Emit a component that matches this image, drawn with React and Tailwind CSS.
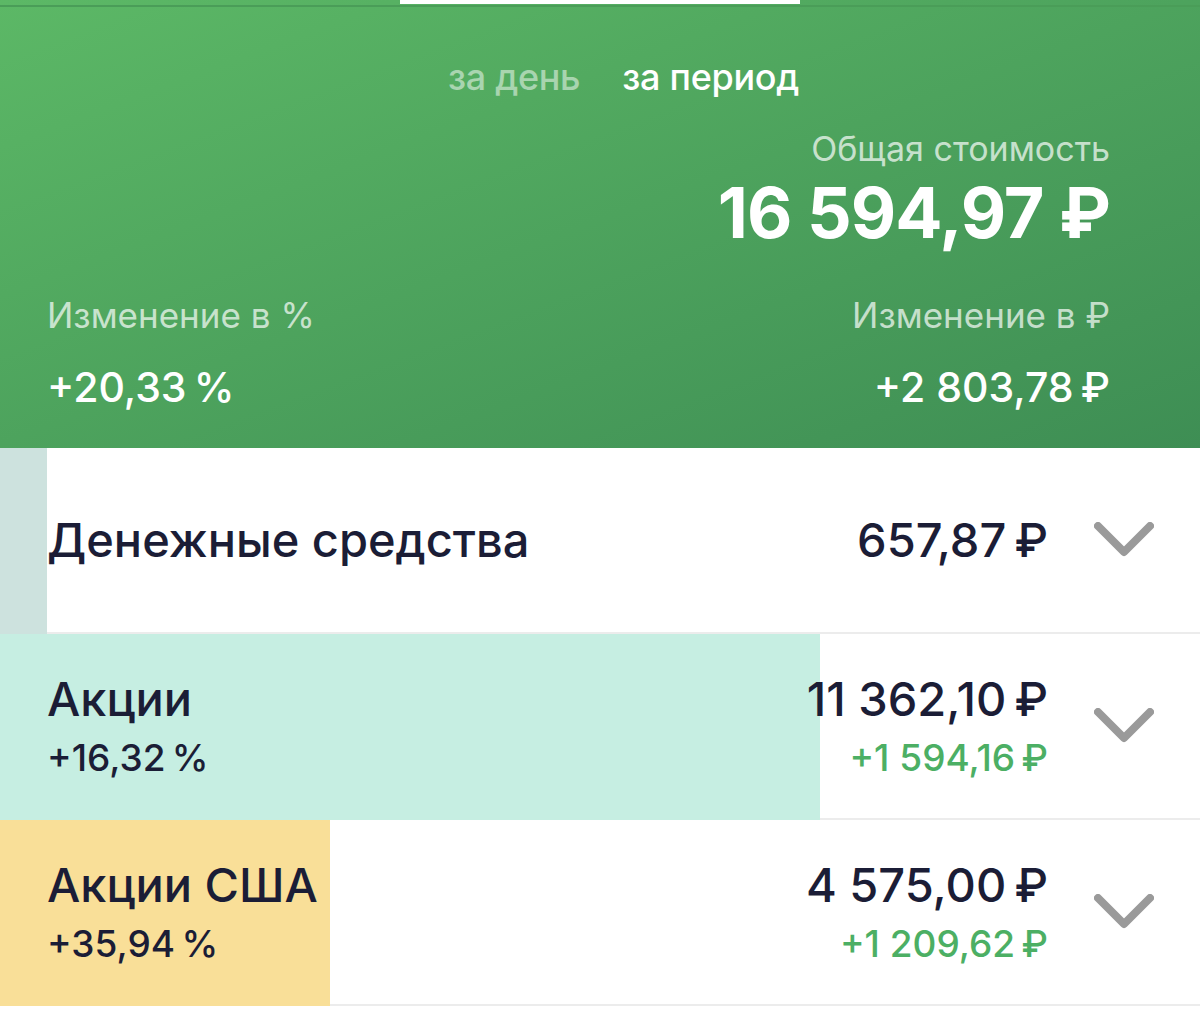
import React from "react";

const Chevron = () => (
  <svg width="60" height="36" viewBox="0 0 60 36" fill="none" className="shrink-0">
    <path d="M4 4 L30 30 L56 4" stroke="#9a9a9a" strokeWidth="8" strokeLinecap="round" strokeLinejoin="round" />
  </svg>
);

const rows = [
  { name: "Денежные средства", value: "657,87\u2009₽", bar: 47, color: "bg-[#cde2de]" },
  { name: "Акции", pct: "+16,32\u2009%", value: "11 362,10\u2009₽", change: "+1 594,16\u2009₽", bar: 820, color: "bg-[#c6eee2]" },
  { name: "Акции США", pct: "+35,94\u2009%", value: "4 575,00\u2009₽", change: "+1 209,62\u2009₽", bar: 330, color: "bg-[#f9df98]" },
];

export default function App() {
  return (
    <div className="w-[1200px] min-h-[1027px] bg-white font-['Inter',sans-serif] text-[#1b1d36]">
      <div className="h-[448px] bg-gradient-to-br from-[#5cb866] to-[#3e8e54] text-white flex flex-col">
        <div className="h-[7px] border-b-2 border-[#4a9d58] flex justify-center">
          <div className="w-[400px] h-[4px] bg-white" />
        </div>
        <div className="flex justify-center pl-[47px] gap-[42px] mt-[50px] text-[36px] leading-[40px] font-medium tracking-[-0.3px]">
          <span className="text-white/50">за день</span>
          <span className="text-white">за период</span>
        </div>
        <div className="flex flex-col items-end pr-[90px] mt-[32px]">
          <div className="text-[34px] leading-[40px] text-white/70">Общая стоимость</div>
          <div className="text-[70px] leading-[80px] font-bold tracking-[-1px] mt-[4px]">16 594,97 ₽</div>
        </div>
        <div className="flex justify-between pl-[47px] pr-[90px] mt-[42px]">
          <div className="flex flex-col">
            <div className="text-[35px] leading-[40px] text-white/70">Изменение в %</div>
            <div className="text-[41px] leading-[44px] font-medium mt-[30px]">+20,33{"\u2009"}%</div>
          </div>
          <div className="flex flex-col items-end">
            <div className="text-[35px] leading-[40px] text-white/70">Изменение в ₽</div>
            <div className="text-[41px] leading-[44px] font-medium mt-[30px]">+2 803,78{"\u2009"}₽</div>
          </div>
        </div>
      </div>
      {rows.map((r) => (
        <div key={r.name} className="relative h-[186px] border-b-2 border-[#ececec]">
          <div className={`absolute left-0 top-0 bottom-[-2px] ${r.color}`} style={{ width: r.bar }} />
          <div className="relative h-full flex items-center pl-[47px] pr-[46px]">
            <div className="flex-1 flex flex-col">
              <div className="text-[47px] leading-[54px] font-medium">{r.name}</div>
              {r.pct && <div className="text-[37px] leading-[44px] font-medium mt-[10px]">{r.pct}</div>}
            </div>
            <div className="flex flex-col items-end">
              <div className="text-[47px] leading-[54px] font-medium">{r.value}</div>
              {r.change && <div className="text-[37px] leading-[44px] font-medium mt-[10px] text-[#4caf64]">{r.change}</div>}
            </div>
            <div className="ml-[46px]">
              <Chevron />
            </div>
          </div>
        </div>
      ))}
    </div>
  );
}
